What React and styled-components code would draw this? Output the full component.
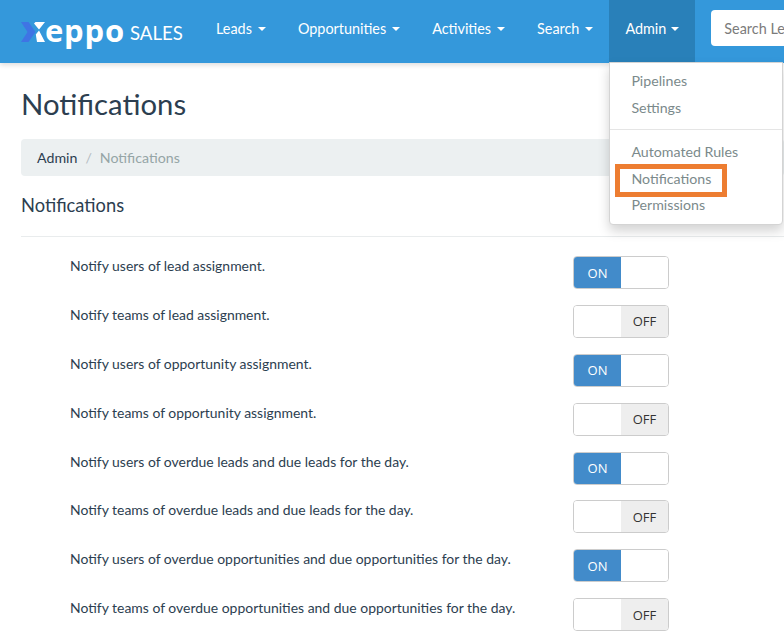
import React from "react";
import styled, { createGlobalStyle } from "styled-components";

const Global = createGlobalStyle`
  html, body { margin: 0; padding: 0; width: 784px; height: 640px; overflow: hidden; background: #fff; }
  body { font-family: Lato, "Noto Sans", sans-serif; font-size: 14px; color: #2c3e50; }
  * { box-sizing: border-box; }
`;

const Navbar = styled.nav`
  display: flex; align-items: stretch; height: 63px; width: 784px; padding-left: 21px;
  background: #3498db; box-shadow: 0 2px 5px rgba(0,0,0,.14); position: relative; z-index: 2;
`;
const Brand = styled.div`
  display: flex; align-items: center; width: 179px; flex: none; color: #fff;
`;
const LogoWord = styled.span`
  font-family: "Open Sans", sans-serif; font-weight: 700; font-size: 31px; letter-spacing: 0.8px; line-height: 1; margin-top: -3px;
`;
const Product = styled.span`
  font-size: 18.6px; margin-left: 5px; margin-top: 3px;
`;
const NavItem = styled.div`
  position: relative; display: flex; align-items: center; gap: ${p => (p.$active ? "5px" : "6px")}; flex: none;
  padding: 0 16px 7px; font-size: 14.4px; color: #fff;
  margin-right: ${p => (p.$active ? "16px" : "0")};
  background: ${p => (p.$active ? "#2980b9" : "transparent")};
`;
const Caret = styled.span`
  width: 0; height: 0; margin-top: 2px; border-top: 4px solid #fff; border-left: 4px solid transparent; border-right: 4px solid transparent;
`;
const SearchBox = styled.div`
  display: flex; align-items: center; flex: none; align-self: flex-start; margin-top: 10px;
  width: 180px; height: 36px; padding-left: 13px; background: #fff; border-radius: 4px;
  font-size: 14.4px; color: #7b7b7b;
`;
const Menu = styled.div`
  position: absolute; top: 62px; left: 0; width: 174px; height: 163px; padding: 5px 0; background: #fff;
  border: 1px solid #d4d4d4; border-radius: 0 0 4px 4px; box-shadow: 0 6px 12px rgba(0,0,0,.175);
`;
const MenuLink = styled.div`
  height: 26.5px; line-height: 26.5px; padding-left: 21px; font-size: 14.2px; color: #7b8a8b;
`;
const MenuDivider = styled.div`
  height: 1px; margin: 8px 0 9px; background: #e5e5e5;
`;
const Highlight = styled.div`
  position: absolute; left: 5px; top: 101px; width: 112px; height: 33px; border: 5px solid #ed7d31;
`;
const Main = styled.main`
  padding: 0 0 0 21px; width: 784px;
`;
const Title = styled.h1`
  margin: 22px 0 17px; font-size: 29.3px; font-weight: 400; line-height: 37px; color: #2c3e50;
`;
const Crumbs = styled.div`
  display: flex; align-items: center; height: 37px; padding-left: 16px; border-radius: 4px;
  background: #ecf0f1; font-size: 14.2px;
`;
const CrumbSep = styled.span`
  padding: 0 8px; color: #b4bcc2;
`;
const CrumbCurrent = styled.span`
  color: #95a5a6;
`;
const Section = styled.h2`
  margin: 17px 0 0; padding-bottom: 19px; font-size: 18.3px; font-weight: 400; line-height: 24px; color: #2c3e50;
  border-bottom: 1px solid #e9eced;
`;
const Rows = styled.div`
  display: flex; flex-direction: column; gap: 15.88px; padding-top: 20px;
`;
const Row = styled.div`
  display: flex; justify-content: space-between; width: 648px; height: 33px; padding-left: 49px;
`;
const RowLabel = styled.span`
  font-size: 13.95px; line-height: 20px; color: #2c3e50; margin-top: -1px;
`;
const Toggle = styled.div`
  display: flex; width: 96px; height: 33px; border: 1px solid #ccc; border-radius: 4px; overflow: hidden; flex: none; margin-top: -1px;
`;
const ToggleSide = styled.span`
  display: flex; align-items: center; justify-content: center; width: 47px; font-family: "Open Sans", sans-serif; font-size: 13px; font-weight: 400;
  color: ${p => (p.$kind === "on" ? "#fff" : "#333")};
  background: ${p => (p.$kind === "on" ? "#428bca" : p.$kind === "off" ? "#eee" : "#fff")};
  flex: ${p => (p.$kind === "blank" ? "1" : "none")};
`;

function LogoMark() {
  return (
    <svg width="24" height="20" viewBox="0 0 24 20" aria-hidden="true">
      <path d="M0 0h7.5l7 10-7 10H0l6.5-10z" fill="#3f74e4" />
      <path d="M14.5 0H24l-6 7.6L13 1.5zM14.8 12.6l3.2-4.2L24 20h-8z" fill="#fff" />
    </svg>
  );
}

const rows = [
  ["Notify users of lead assignment.", true],
  ["Notify teams of lead assignment.", false],
  ["Notify users of opportunity assignment.", true],
  ["Notify teams of opportunity assignment.", false],
  ["Notify users of overdue leads and due leads for the day.", true],
  ["Notify teams of overdue leads and due leads for the day.", false],
  ["Notify users of overdue opportunities and due opportunities for the day.", true],
  ["Notify teams of overdue opportunities and due opportunities for the day.", false],
];

export default function App() {
  return (
    <>
      <Global />
      <Navbar>
        <Brand>
          <LogoMark />
          <LogoWord>eppo</LogoWord>
          <Product>SALES</Product>
        </Brand>
        {["Leads", "Opportunities", "Activities", "Search"].map(n => (
          <NavItem key={n}>{n}<Caret /></NavItem>
        ))}
        <NavItem $active>
          Admin<Caret />
          <Menu>
            <MenuLink>Pipelines</MenuLink>
            <MenuLink>Settings</MenuLink>
            <MenuDivider />
            <MenuLink>Automated Rules</MenuLink>
            <MenuLink>Notifications</MenuLink>
            <MenuLink>Permissions</MenuLink>
            <Highlight />
          </Menu>
        </NavItem>
        <SearchBox>Search Leads</SearchBox>
      </Navbar>
      <Main>
        <Title>Notifications</Title>
        <Crumbs>Admin<CrumbSep>/</CrumbSep><CrumbCurrent>Notifications</CrumbCurrent></Crumbs>
        <Section>Notifications</Section>
        <Rows>
          {rows.map(([label, on]) => (
            <Row key={label}>
              <RowLabel>{label}</RowLabel>
              <Toggle>
                {on ? <ToggleSide $kind="on">ON</ToggleSide> : <ToggleSide $kind="blank" />}
                {on ? <ToggleSide $kind="blank" /> : <ToggleSide $kind="off">OFF</ToggleSide>}
              </Toggle>
            </Row>
          ))}
        </Rows>
      </Main>
    </>
  );
}
